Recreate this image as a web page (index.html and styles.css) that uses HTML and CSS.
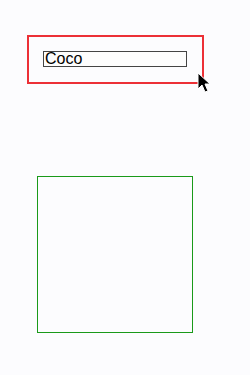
FILE: index.html
```html
<!DOCTYPE html>
<html>
<head>
<meta charset="utf-8">
<link rel="stylesheet" href="styles.css">
</head>
<body>
<div class="page">
  <div class="frame">
    <input class="name-input" type="text" value="Coco">
    <svg class="cursor" width="14" height="24" viewBox="0 0 14 24">
      <path d="M1 1 L1 17 L5 13 L8 20 L11 19 L8 12 L13 12 Z" fill="#000" stroke="#fff" stroke-width="1"/>
    </svg>
  </div>
  <div class="green-box"></div>
</div>
</body>
</html>
```
FILE: styles.css
```css
html, body {
  margin: 0;
  padding: 0;
  background: #fcfcfe;
}
.page {
  display: flex;
  flex-direction: column;
  align-items: flex-start;
  padding-top: 35px;
}
.frame {
  position: relative;
  margin-left: 27px;
  width: 173px;
  height: 45px;
  border: 2px solid #ec3036;
}
.name-input {
  display: block;
  margin: 14px 0 0 14px;
  width: 144px;
  height: 16px;
  box-sizing: border-box;
  border: 1px solid #444;
  padding: 0 1px;
  background: #fdfdfd;
  font-family: "Liberation Sans", Arial, sans-serif;
  font-size: 16px;
  font-weight: 400;
  line-height: 14px;
  color: #000;
  outline: none;
}
.cursor {
  position: absolute;
  left: 168px;
  top: 35px;
}
.green-box {
  margin-top: 92px;
  margin-left: 37px;
  width: 154px;
  height: 155px;
  border: 1px solid #1a9a1a;
}
```
